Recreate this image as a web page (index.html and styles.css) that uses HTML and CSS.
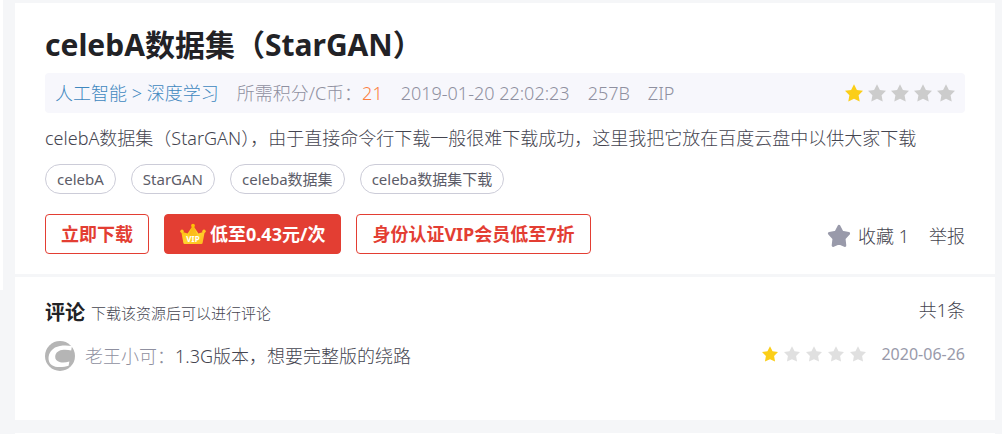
FILE: index.html
```html
<!DOCTYPE html>
<html lang="zh-CN">
<head>
    <meta charset="UTF-8">
    <meta name="viewport" content="width=device-width, initial-scale=1.0">
    <title>celebA数据集（StarGAN）</title>
    <link rel="stylesheet" href="styles.css">
</head>
<body>
    <!-- Shared icons -->
    <svg class="sprite" aria-hidden="true">
        <symbol id="star" viewBox="0 0 18 18">
            <path d="M9 0.2 L11.9 5.9 L18 6.8 L13.6 11.2 L14.7 17.4 L9 14.8 L3.3 17.4 L4.4 11.2 L0 6.8 L6.1 5.9 Z"/>
        </symbol>
    </svg>

    <div class="layout">
        <aside class="side"></aside>

        <main class="content">
            <section class="card resource">
                <h1>celebA数据集（StarGAN）</h1>

                <div class="info">
                    <div class="path"><a href="#">人工智能</a> &gt; <a href="#">深度学习</a></div>
                    <span>所需积分/C币：<em>21</em></span>
                    <span>2019-01-20 22:02:23</span>
                    <span>257B</span>
                    <span>ZIP</span>
                    <div class="stars" role="img" aria-label="1 / 5">
                        <svg class="on"><use href="#star"/></svg>
                        <svg><use href="#star"/></svg>
                        <svg><use href="#star"/></svg>
                        <svg><use href="#star"/></svg>
                        <svg><use href="#star"/></svg>
                    </div>
                </div>

                <p class="desc">celebA数据集（StarGAN），由于直接命令行下载一般很难下载成功，这里我把它放在百度云盘中以供大家下载</p>

                <div class="tags">
                    <a href="#">celebA</a>
                    <a href="#">StarGAN</a>
                    <a href="#">celeba数据集</a>
                    <a href="#">celeba数据集下载</a>
                </div>

                <div class="actions">
                    <button type="button" class="btn">立即下载</button>
                    <button type="button" class="btn btn-vip">
                        <svg class="crown" viewBox="0 0 26 22" aria-hidden="true">
                            <defs>
                                <linearGradient id="gold" x1="0" y1="0" x2="1" y2="1">
                                    <stop offset="0" stop-color="#ffb400"/>
                                    <stop offset="0.5" stop-color="#ffd52e"/>
                                    <stop offset="1" stop-color="#ffb91c"/>
                                </linearGradient>
                            </defs>
                            <path fill="url(#gold)" d="M3.4 20 L1.2 8.4 L7.6 10.6 L12.2 3.6 H13.8 L18.4 10.6 L24.8 8.4 L22.6 20 Q22.5 21 21.4 21 H4.6 Q3.5 21 3.4 20 Z"/>
                            <path fill="#f5a00a" d="M12.2 3.6 L8.6 12 Q13 15 17.4 12 L13.8 3.6 Z" opacity="0.4"/>
                            <circle cx="13" cy="2.6" r="1.9" fill="#ffc107"/>
                            <circle cx="2" cy="8.2" r="1.7" fill="#ffc91f"/>
                            <circle cx="24" cy="8.2" r="1.7" fill="#ffc91f"/>
                            <text x="13" y="18.6" text-anchor="middle">VIP</text>
                        </svg>
                        低至0.43元/次
                    </button>
                    <button type="button" class="btn">身份认证VIP会员低至7折</button>

                    <div class="links">
                        <button type="button" class="link">
                            <svg class="fav" viewBox="0 0 24 24" aria-hidden="true">
                                <path d="M12 2.4 L15 8.2 L21.6 9.4 L17 14.4 L17.8 21.4 L12 18.8 L6.2 21.4 L7 14.4 L2.4 9.4 L9 8.2 Z"/>
                            </svg>
                            收藏 1
                        </button>
                        <button type="button" class="link">举报</button>
                    </div>
                </div>
            </section>

            <section class="card comments">
                <div class="comments-head">
                    <h2>评论</h2>
                    <span class="hint">下载该资源后可以进行评论</span>
                    <span class="total">共1条</span>
                </div>
                <div class="comment">
                    <svg class="avatar" viewBox="0 0 30 30" aria-hidden="true">
                        <circle cx="15" cy="15" r="15" fill="#b5b5b5"/>
                        <path fill="#fff" d="M27 5 C22 4 14.5 4 10 6.6 C5.4 9.4 3.2 14 3.6 18.4 C4.2 23.6 8.6 26 14.4 26 C18 26 21.4 25.6 23.6 24.8 L24.4 20.6 C21 21.4 18 21.8 15.2 21.2 C11.6 20.4 10 18.4 10.2 15.6 C10.6 11.4 14 9 18.6 8.8 C21.4 8.6 24 9 26.2 9.4 Z"/>
                    </svg>
                    <a class="name" href="#">老王小可：</a>
                    <span class="text">1.3G版本，想要完整版的绕路</span>
                    <div class="stars small" role="img" aria-label="1 / 5">
                        <svg class="on"><use href="#star"/></svg>
                        <svg><use href="#star"/></svg>
                        <svg><use href="#star"/></svg>
                        <svg><use href="#star"/></svg>
                        <svg><use href="#star"/></svg>
                    </div>
                    <time datetime="2020-06-26">2020-06-26</time>
                </div>
            </section>

            <section class="card more"></section>
        </main>
    </div>
</body>
</html>
```
FILE: styles.css
```css
* {
    box-sizing: border-box;
}
body {
    margin: 0;
    background-color: #f5f6f8;
    color: #44444f;
    font-family: "Noto Sans", "Noto Sans CJK SC", sans-serif;
    font-size: 18px;
    font-weight: 300;
    line-height: 26px;
}
h1, h2, p {
    margin: 0;
}
a {
    color: inherit;
    text-decoration: none;
}
button {
    font: inherit;
    cursor: pointer;
}
.sprite {
    position: absolute;
    width: 0;
    height: 0;
}

/* Page layout */
.layout {
    display: flex;
    gap: 12px;
    min-height: 100vh;
    padding-right: 7px;
}
.side {
    width: 3px;
    height: 290px;
    background-color: #fff;
}
.content {
    flex: 1;
    display: flex;
    flex-direction: column;
    padding-top: 3px;
}
.card {
    background-color: #fff;
    padding: 20px 30px;
}

/* Resource */
.resource {
    padding-top: 22px;
}
h1 {
    color: #222226;
    font-size: 30px;
    font-weight: 700;
    line-height: 40px;
}
.info {
    display: flex;
    align-items: center;
    gap: 18px;
    height: 40px;
    margin-top: 8px;
    padding: 0 10px;
    border-radius: 4px;
    background-color: #f7f7fc;
    color: #8f90a0;
    white-space: nowrap;
}
.info em {
    color: #fc7f3f;
    font-style: normal;
}
.path {
    color: #3f88bf;
}
.stars {
    display: flex;
    gap: 5px;
    margin-left: auto;
    fill: #ccc;
}
.stars svg {
    width: 18px;
    height: 18px;
}
.stars .on {
    fill: #fbce18;
}
.desc {
    margin-top: 12px;
}
.tags {
    display: flex;
    gap: 15px;
    margin-top: 13px;
}
.tags a {
    padding: 0 11px;
    border: 1px solid #ccccd8;
    border-radius: 15px;
    color: #5c5c68;
    font-size: 15px;
    font-weight: 400;
    line-height: 28px;
}
.actions {
    display: flex;
    align-items: center;
    gap: 15px;
    margin-top: 20px;
}
.btn {
    display: flex;
    align-items: center;
    gap: 4px;
    height: 40px;
    padding: 0 15px;
    border: 1px solid #e33e33;
    border-radius: 4px;
    background-color: #fff;
    color: #e33e33;
    font-weight: 700;
    white-space: nowrap;
}
.btn-vip {
    background-color: #e33e33;
    color: #fff;
}
.crown {
    width: 26px;
    height: 22px;
}
.crown text {
    fill: #fff;
    font-size: 8px;
    font-weight: 700;
}
.links {
    display: flex;
    gap: 20px;
    margin-left: auto;
    padding-top: 4px;
}
.link {
    display: flex;
    align-items: center;
    gap: 7px;
    padding: 0;
    border: 0;
    background: none;
    color: inherit;
}
.fav {
    width: 24px;
    height: 24px;
    fill: #999aaa;
    stroke: #999aaa;
    stroke-width: 3;
    stroke-linejoin: round;
}

/* Comments */
.comments {
    margin-top: 3px;
    padding-bottom: 49px;
}
.comments-head {
    display: flex;
    align-items: center;
    gap: 6px;
}
h2 {
    color: #222226;
    font-size: 20px;
    font-weight: 700;
    line-height: 32px;
}
.hint {
    font-size: 15px;
}
.total {
    align-self: flex-start;
    margin-left: auto;
}
.comment {
    display: flex;
    align-items: center;
    margin-top: 12px;
}
.avatar {
    width: 30px;
    height: 30px;
    margin-right: 10px;
}
.name {
    color: #8f90a0;
}
.small {
    gap: 6px;
    margin-bottom: 4px;
    fill: #e0e0e0;
}
.small svg {
    width: 16px;
    height: 16px;
}
time {
    margin: 0 0 4px 15px;
    color: #999aaa;
    font-size: 16px;
    font-weight: 400;
}
.more {
    flex: 1;
    margin-top: 13px;
    padding: 0;
}
```
